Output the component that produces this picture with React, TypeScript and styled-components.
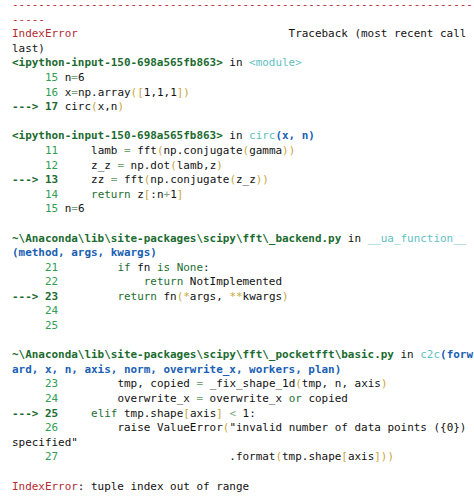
import React from "react";
import styled, { createGlobalStyle, css } from "styled-components";

const GlobalStyle = createGlobalStyle`
  html, body {
    margin: 0;
    padding: 0;
    background: #ffffff;
  }
  body {
    overflow: hidden;
  }
`;

type Tone = "plain" | "red" | "num" | "lead" | "cyan" | "blue" | "paren" | "op" | "kw";
type Seg = [string, Tone?];

const toneCss: Record<Tone, ReturnType<typeof css>> = {
  plain: css`color: #111111;`,
  red: css`color: #b22b31;`,
  num: css`color: #2f9d54;`,
  lead: css`color: #1c6b30; font-weight: bold;`,
  cyan: css`color: #5fbfc2;`,
  blue: css`color: #1a5fb4; font-weight: bold;`,
  paren: css`color: #c9a53a;`,
  op: css`color: #7aa57a;`,
  kw: css`color: #1d6e32;`,
};

const Output = styled.div`
  margin-top: -2px;
  padding-left: 12px;
  font-family: "DejaVu Sans Mono", "Liberation Mono", monospace;
  font-size: 10.95px;
  line-height: 14.6px;
  color: #111111;
`;

const Line = styled.div`
  white-space: pre;
  height: 14.6px;
  overflow: hidden;
`;

const Tok = styled.span<{ $tone: Tone }>`
  ${(p) => toneCss[p.$tone]}
`;

const KW = new Set(["if", "is", "None", "return", "elif", "or"]);

function code(src: string): Seg[] {
  const out: Seg[] = [];
  const re = /([A-Za-z_][A-Za-z_0-9]*)|([()\[\]{}*])|([=<+])|(\s+|.)/g;
  let m: RegExpExecArray | null;
  while ((m = re.exec(src))) {
    if (m[1]) out.push([m[1], KW.has(m[1]) ? "kw" : "plain"]);
    else if (m[2]) out.push([m[2], "paren"]);
    else if (m[3]) out.push([m[3], "op"]);
    else out.push([m[4], "plain"]);
  }
  return out;
}

function src(no: number, text: string, current = false): Seg[] {
  const head: Seg[] = current
    ? [["---> " + no, "lead"]]
    : [["     "], [String(no), "num"]];
  return [...head, [" "], ...code(text)];
}

const lines: Seg[][] = [
  [["-".repeat(70), "red"]],
  [["-----", "red"]],
  [["IndexError", "red"], [" ".repeat(32) + "Traceback (most recent call "]],
  [["last)"]],
  [["<ipython-input-150-698a565fb863>", "lead"], [" in "], ["<module>", "cyan"]],
  src(15, "n=6"),
  src(16, "x=np.array([1,1,1])"),
  src(17, "circ(x,n)", true),
  [],
  [["<ipython-input-150-698a565fb863>", "lead"], [" in "], ["circ", "cyan"], ["(x, n)", "blue"]],
  src(11, "    lamb = fft(np.conjugate(gamma))"),
  src(12, "    z_z = np.dot(lamb,z)"),
  src(13, "    zz = fft(np.conjugate(z_z))", true),
  src(14, "    return z[:n+1]"),
  src(15, "n=6"),
  [],
  [["~\\Anaconda\\lib\\site-packages\\scipy\\fft\\_backend.py", "lead"], [" in "], ["__ua_function__", "cyan"]],
  [["(method, args, kwargs)", "blue"]],
  src(21, "        if fn is None:"),
  src(22, "            return NotImplemented"),
  src(23, "        return fn(*args, **kwargs)", true),
  src(24, ""),
  src(25, ""),
  [],
  [["~\\Anaconda\\lib\\site-packages\\scipy\\fft\\_pocketfft\\basic.py", "lead"], [" in "], ["c2c", "cyan"], ["(forw", "blue"]],
  [["ard, x, n, axis, norm, overwrite_x, workers, plan)", "blue"]],
  src(23, "        tmp, copied = _fix_shape_1d(tmp, n, axis)"),
  src(24, "        overwrite_x = overwrite_x or copied"),
  src(25, "    elif tmp.shape[axis] < 1:", true),
  [["     "], ["26", "num"], [" "], ...code("        raise ValueError("), ["\"invalid number of data points ({0})"]],
  [["specified\""]],
  src(27, " ".repeat(25) + ".format(tmp.shape[axis]))"),
  [],
  [["IndexError", "red"], [": tuple index out of range"]],
];

export default function App() {
  return (
    <>
      <GlobalStyle />
      <Output>
        {lines.map((segs, i) => (
          <Line key={i}>
            {segs.map(([t, tone], j) => (
              <Tok key={j} $tone={tone ?? "plain"}>
                {t}
              </Tok>
            ))}
          </Line>
        ))}
      </Output>
    </>
  );
}
